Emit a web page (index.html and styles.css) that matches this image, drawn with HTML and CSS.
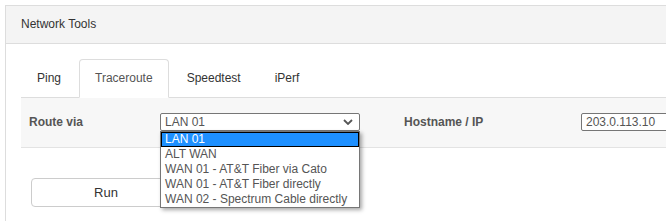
FILE: index.html
```html
<!DOCTYPE html>
<html lang="en">
<head>
    <meta charset="UTF-8">
    <meta name="viewport" content="width=device-width, initial-scale=1.0">
    <title>Network Tools</title>
    <link rel="stylesheet" href="styles.css">
</head>
<body>
    <div class="panel">
        <div class="panel-heading">Network Tools</div>
        <div class="panel-body">
            <ul class="tabs">
                <li class="tab">Ping</li>
                <li class="tab active">Traceroute</li>
                <li class="tab">Speedtest</li>
                <li class="tab">iPerf</li>
            </ul>
            <div class="tab-content">
                <div class="form-row">
                    <label class="label label-route">Route via</label>
                    <div class="select-wrap">
                        <div class="select">
                            <span>LAN 01</span>
                            <svg class="chevron" width="10" height="6" viewBox="0 0 10 6">
                                <path d="M1 1 L5 5 L9 1" fill="none" stroke="#555" stroke-width="1.8"/>
                            </svg>
                        </div>
                        <ul class="options">
                            <li class="option selected">LAN 01</li>
                            <li class="option">ALT WAN</li>
                            <li class="option">WAN 01 - AT&amp;T Fiber via Cato</li>
                            <li class="option">WAN 01 - AT&amp;T Fiber directly</li>
                            <li class="option">WAN 02 - Spectrum Cable directly</li>
                        </ul>
                    </div>
                    <label class="label label-host">Hostname / IP</label>
                    <input class="input" type="text" value="203.0.113.10">
                </div>
            </div>
            <button class="btn">Run</button>
        </div>
    </div>
</body>
</html>
```

FILE: styles.css
```css
body {
    margin: 0;
    overflow: hidden;
    background: #fff;
    font-family: "Liberation Sans", Arial, sans-serif;
    font-size: 12px;
    color: #333;
}

.panel {
    margin: 5px 0 0 5px;
    width: 660px;
    height: 215px;
    overflow: hidden;
    border: 1px solid #ddd;
    border-right: none;
    border-bottom: none;
}

.panel-heading {
    height: 37px;
    line-height: 37px;
    padding-left: 15px;
    background: #f4f4f4;
    border-bottom: 1px solid #ddd;
}

.panel-body {
    padding: 15px 0 15px 15px;
}

.tabs {
    display: flex;
    list-style: none;
    margin: 0;
    padding: 0;
    border-bottom: 1px solid #ddd;
}

.tab {
    padding: 10px 15px;
    line-height: 17px;
    margin-right: 2px;
    margin-bottom: -1px;
    border: 1px solid transparent;
    border-radius: 4px 4px 0 0;
    color: #333;
}

.tab.active {
    color: #555;
    background: #fff;
    border-color: #ddd #ddd transparent;
}

.tab-content {
    background: #f7f7f7;
    border-bottom: 1px solid #e3e3e3;
    padding: 15px 8px 16px;
}

.form-row {
    display: flex;
    align-items: center;
}

.form-row > * {
    flex: none;
}

.label {
    font-weight: bold;
    color: #555;
}

.label-route {
    width: 131px;
}

.label-host {
    width: 177px;
    margin-left: 44px;
}

.select-wrap {
    position: relative;
    width: 200px;
}

.select {
    display: flex;
    align-items: center;
    justify-content: space-between;
    height: 16px;
    padding: 0 6px 0 4px;
    background: #fff;
    border: 1px solid #767676;
    border-radius: 2px;
    color: #555;
}

.options {
    position: absolute;
    top: 18px;
    left: 0;
    width: 198px;
    margin: 0;
    padding: 0;
    list-style: none;
    background: #fff;
    border: 1px solid #767676;
    box-shadow: 2px 2px 4px rgba(0, 0, 0, 0.35);
}

.option {
    height: 15px;
    line-height: 15px;
    padding-left: 4px;
    color: #555;
    white-space: nowrap;
}

.option.selected {
    height: 13px;
    line-height: 13px;
    padding-left: 3px;
    background: #1e90ff;
    color: #fff;
    border: 1px solid #000;
}

.input {
    width: 150px;
    height: 16px;
    padding: 0 4px;
    margin: 0;
    border: 1px solid #767676;
    border-radius: 2px;
    font-family: inherit;
    font-size: 12px;
    color: #555;
}

.btn {
    display: block;
    margin: 30px 0 0 10px;
    width: 150px;
    height: 29px;
    background: #fff;
    border: 1px solid #ccc;
    border-radius: 4px;
    font-family: inherit;
    font-size: 13px;
    color: #333;
}
```
